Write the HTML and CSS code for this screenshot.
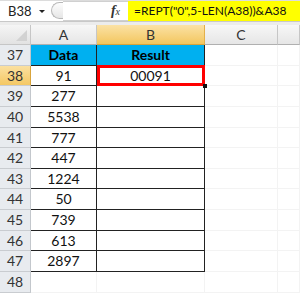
FILE: index.html
```html
<!DOCTYPE html>
<html>
<head>
<meta charset="utf-8">
<link rel="stylesheet" href="styles.css">
</head>
<body>
<div class="formula-bar">
  <div class="namebox"><span class="name">B38</span><span class="arrow"></span></div>
  <div class="handle"></div>
  <div class="fx-area"><span class="fx">f<span class="fx-x">x</span></span></div>
  <div class="formula">=REPT("0",5-LEN(A38))&amp;A38</div>
</div>
<div class="sep"></div>
<div class="sheet">
  <div class="corner"></div>
  <div class="colhead">A</div>
  <div class="colhead sel">B</div>
  <div class="colhead">C</div>
  <div class="colhead"></div>

  <div class="rowhead">37</div>
  <div class="cell d title">Data</div>
  <div class="cell d title">Result</div>
  <div class="cell"></div><div class="cell"></div>

  <div class="rowhead sel">38</div>
  <div class="cell d">91</div>
  <div class="cell d active">00091</div>
  <div class="cell"></div><div class="cell"></div>

  <div class="rowhead">39</div>
  <div class="cell d">277</div><div class="cell d"></div>
  <div class="cell"></div><div class="cell"></div>

  <div class="rowhead">40</div>
  <div class="cell d">5538</div><div class="cell d"></div>
  <div class="cell"></div><div class="cell"></div>

  <div class="rowhead">41</div>
  <div class="cell d">777</div><div class="cell d"></div>
  <div class="cell"></div><div class="cell"></div>

  <div class="rowhead">42</div>
  <div class="cell d">447</div><div class="cell d"></div>
  <div class="cell"></div><div class="cell"></div>

  <div class="rowhead">43</div>
  <div class="cell d">1224</div><div class="cell d"></div>
  <div class="cell"></div><div class="cell"></div>

  <div class="rowhead">44</div>
  <div class="cell d">50</div><div class="cell d"></div>
  <div class="cell"></div><div class="cell"></div>

  <div class="rowhead">45</div>
  <div class="cell d">739</div><div class="cell d"></div>
  <div class="cell"></div><div class="cell"></div>

  <div class="rowhead">46</div>
  <div class="cell d">613</div><div class="cell d"></div>
  <div class="cell"></div><div class="cell"></div>

  <div class="rowhead">47</div>
  <div class="cell d">2897</div><div class="cell d"></div>
  <div class="cell"></div><div class="cell"></div>

  <div class="rowhead">48</div>
  <div class="cell"></div><div class="cell"></div>
  <div class="cell"></div><div class="cell"></div>
</div>
</body>
</html>
```
FILE: styles.css
```css
html, body {
  margin: 0;
  padding: 0;
  background: #fff;
}
body {
  width: 300px;
  height: 293px;
  overflow: hidden;
  font-family: Lato, "Liberation Sans", sans-serif;
}
.formula-bar {
  display: flex;
  height: 21px;
  background: #fff;
  border-top: 1px solid #dcdcdc;
  box-sizing: border-box;
}
.namebox {
  width: 51px;
  display: flex;
  align-items: center;
  justify-content: space-between;
  padding: 0 6px 0 8px;
  box-sizing: border-box;
  font-size: 13px;
  color: #222;
}
.arrow {
  width: 0;
  height: 0;
  border-left: 3px solid transparent;
  border-right: 3px solid transparent;
  border-top: 3px solid #222;
}
.handle {
  width: 12px;
  height: 17px;
  margin-top: 1px;
  border: 1px solid #b8b8b8;
  border-right: none;
  border-radius: 9px 0 0 9px;
  background: linear-gradient(#fdfdfd, #e6e6e6);
  box-sizing: border-box;
}
.fx-area {
  width: 65px;
  display: flex;
  align-items: center;
  justify-content: flex-end;
  padding-right: 8px;
  box-sizing: border-box;
  border-top: 1px solid #d0d0d0;
  border-bottom: 1px solid #d0d0d0;
}
.fx {
  font-family: "Liberation Serif", serif;
  font-style: italic;
  font-weight: bold;
  font-size: 14px;
  color: #333;
}
.fx-x {
  font-size: 10px;
  font-weight: normal;
}
.formula {
  flex: 1;
  background: #ffff00;
  font-size: 12px;
  line-height: 20px;
  padding-left: 6px;
  color: #111;
  white-space: nowrap;
}
.sep {
  height: 4px;
  background: #ececec;
  border-top: 1px solid #c8c8c8;
  box-sizing: border-box;
}
.sheet {
  display: grid;
  grid-template-columns: 31px 66px 108px 73px 22px;
  grid-template-rows: 20px;
  grid-auto-rows: 20.65px;
}
.corner {
  background: linear-gradient(#f5f5f5, #e2e2e2);
  border-right: 1px solid #c6c6c6;
  border-bottom: 1px solid #c6c6c6;
  box-sizing: border-box;
  position: relative;
}
.corner::after {
  content: "";
  position: absolute;
  right: 3px;
  bottom: 3px;
  width: 0;
  height: 0;
  border-left: 11px solid transparent;
  border-bottom: 11px solid #d2d2d2;
}
.colhead {
  background: linear-gradient(#f7f7f7, #e6e6e6);
  border-right: 1px solid #c6c6c6;
  border-bottom: 1px solid #b0b0b0;
  box-sizing: border-box;
  text-align: center;
  font-size: 14px;
  line-height: 20px;
  color: #333;
}
.colhead.sel {
  background: linear-gradient(#fbe2a5, #f3c65f);
  border-right-color: #e3b04a;
  border-bottom-color: #d9a43c;
}
.rowhead {
  background: #e8ebef;
  border-right: 1px solid #c3c7cc;
  border-bottom: 1px solid #c9ccd0;
  box-sizing: border-box;
  text-align: center;
  font-size: 14px;
  line-height: 20px;
  color: #333;
}
.rowhead.sel {
  background: linear-gradient(#fbe0a0, #f4c864);
  border-right-color: #d9a43c;
}
.cell {
  border-right: 1px solid #f3f3f3;
  border-bottom: 1px solid #f3f3f3;
  box-sizing: border-box;
  font-size: 14px;
  line-height: 20px;
  text-align: center;
  color: #111;
}
.cell.d {
  border-right: 1px solid #222;
  border-bottom: 1px solid #222;
}
.cell.title {
  background: #00b0f0;
  font-weight: bold;
  color: #000;
}
.cell.active {
  position: relative;
}
.cell.active::after {
  content: "";
  position: absolute;
  left: 0;
  top: -1px;
  right: -1px;
  bottom: -1px;
  border: 3px solid #ff0000;
}
.cell.active::before {
  content: "";
  position: absolute;
  right: -3px;
  bottom: -3px;
  width: 4px;
  height: 4px;
  background: #111;
  z-index: 1;
}
```
